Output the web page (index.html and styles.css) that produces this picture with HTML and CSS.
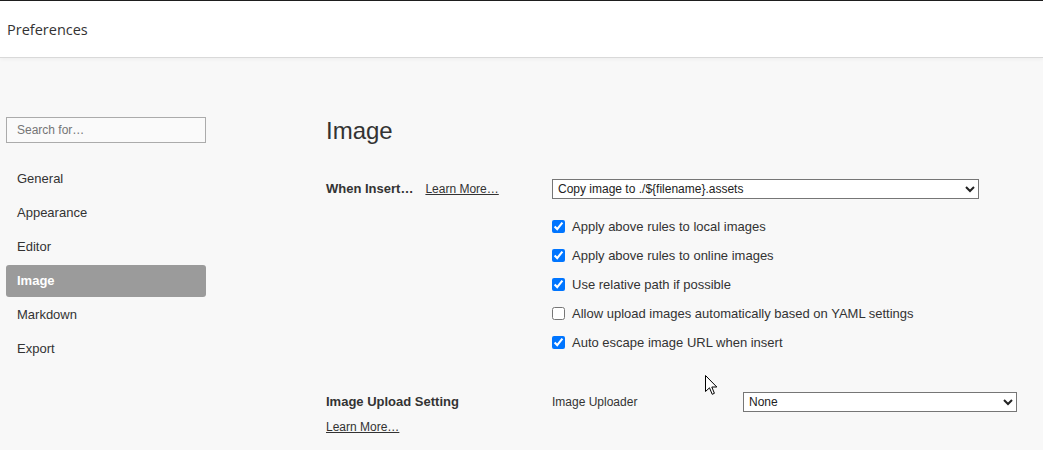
FILE: index.html
```html
<!DOCTYPE html>
<html lang="en">
<head>
<meta charset="utf-8">
<title>Preferences</title>
<link rel="stylesheet" href="styles.css">
</head>
<body>
<header class="titlebar">
  <span class="title">Preferences</span>
</header>
<div class="layout">
  <aside class="sidebar">
    <input class="search" type="text" placeholder="Search for…">
    <ul class="nav">
      <li class="nav-item">General</li>
      <li class="nav-item">Appearance</li>
      <li class="nav-item">Editor</li>
      <li class="nav-item active">Image</li>
      <li class="nav-item">Markdown</li>
      <li class="nav-item">Export</li>
    </ul>
  </aside>
  <main class="content">
    <h1 class="heading">Image</h1>
    <section class="row row-insert">
      <div class="label-col label-inline">
        <b class="label">When Insert…</b>
        <a class="learn">Learn More…</a>
      </div>
      <div class="ctrl-col">
        <select class="select select-wide">
          <option>Copy image to ./${filename}.assets</option>
        </select>
        <ul class="checks">
          <li class="check"><input type="checkbox" checked><span>Apply above rules to local images</span></li>
          <li class="check"><input type="checkbox" checked><span>Apply above rules to online images</span></li>
          <li class="check"><input type="checkbox" checked><span>Use relative path if possible</span></li>
          <li class="check"><input type="checkbox"><span>Allow upload images automatically based on YAML settings</span></li>
          <li class="check"><input type="checkbox" checked><span>Auto escape image URL when insert</span></li>
        </ul>
      </div>
    </section>
    <section class="row row-upload">
      <div class="label-col label-stack">
        <b class="label">Image Upload Setting</b>
        <a class="learn">Learn More…</a>
      </div>
      <div class="ctrl-col upload-ctrl">
        <span class="small-label">Image Uploader</span>
        <select class="select select-upload">
          <option>None</option>
        </select>
      </div>
    </section>
  </main>
</div>
<svg class="cursor" width="14" height="22" viewBox="0 0 14 22" aria-hidden="true">
  <path d="M0.5 0.5 L0.5 16.5 L4.5 12.8 L7.2 19.3 L9.4 18.3 L6.8 12 L11.8 12 Z" fill="#fff" stroke="#000" stroke-width="1" stroke-linejoin="miter"/>
</svg>
</body>
</html>
```

FILE: styles.css
```css
* { box-sizing: border-box; }

html, body {
  margin: 0;
  padding: 0;
}

body {
  background: #f8f8f8;
  color: #333;
  font-family: "Liberation Sans", Arial, sans-serif;
  font-size: 13px;
  height: 450px;
  overflow: hidden;
  position: relative;
}

.titlebar {
  height: 58px;
  background: #fff;
  border-top: 1px solid #1e1e1e;
  border-bottom: 1px solid #d9d9d9;
  box-shadow: 0 1px 4px rgba(0, 0, 0, 0.05);
  display: flex;
  align-items: center;
  padding-left: 7px;
}

.title {
  font-family: "Open Sans", "Noto Sans", sans-serif;
  font-size: 14.5px;
  color: #333;
}

.layout {
  display: flex;
  padding-top: 59px;
}

.sidebar {
  width: 200px;
  margin-left: 6px;
  flex: none;
}

.search {
  display: block;
  width: 200px;
  height: 26px;
  border: 1px solid #ababab;
  background: #fafafa;
  padding: 0 10px;
  font-family: "Liberation Sans", Arial, sans-serif;
  font-size: 12px;
  color: #333;
  outline: none;
}

.search::placeholder {
  color: #757575;
}

.nav {
  list-style: none;
  margin: 20px 0 0;
  padding: 0;
}

.nav-item {
  height: 32px;
  margin-bottom: 2px;
  display: flex;
  align-items: center;
  padding: 0 0 2px 11px;
  font-size: 13px;
  color: #333;
  border-radius: 3px;
}

.nav-item.active {
  background: #9b9b9b;
  color: #fff;
  font-weight: 600;
}

.content {
  margin-left: 120px;
  flex: 1;
}

.heading {
  margin: 0;
  font-size: 24px;
  line-height: 28px;
  font-weight: normal;
  color: #333;
}

.row {
  display: flex;
}

.row-insert {
  margin-top: 34px;
}

.row-upload {
  margin-top: 35px;
}

.label-col {
  width: 226px;
  flex: none;
}

.label-inline {
  display: flex;
  align-items: baseline;
  gap: 12px;
  line-height: 19px;
}

.label-stack {
  display: flex;
  flex-direction: column;
  align-items: flex-start;
  gap: 5px;
  line-height: 20px;
}

.label {
  font-size: 13px;
  font-weight: bold;
  color: #333;
}

.learn {
  font-size: 12px;
  color: #333;
  text-decoration: underline;
}

.select {
  height: 20px;
  border: 1px solid #767676;
  border-radius: 0;
  background: #fff;
  font-family: "Liberation Sans", Arial, sans-serif;
  font-size: 12px;
  color: #222;
  padding: 0 1px;
}

.select-wide {
  display: block;
  width: 427px;
}

.checks {
  list-style: none;
  margin: 13px 0 0;
  padding: 0;
}

.check {
  height: 29px;
  display: flex;
  align-items: center;
  font-size: 13px;
  color: #333;
}

.check input {
  width: 13px;
  height: 13px;
  margin: 0 7px 0 0;
}

.upload-ctrl {
  display: flex;
  align-items: center;
  height: 20px;
}

.small-label {
  width: 191px;
  flex: none;
  font-size: 12px;
  color: #333;
}

.select-upload {
  width: 274px;
}

.cursor {
  position: absolute;
  left: 705px;
  top: 375px;
}
```
